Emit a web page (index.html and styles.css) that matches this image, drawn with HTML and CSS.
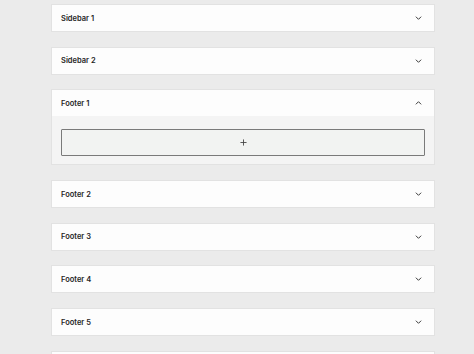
FILE: index.html
```html
<!DOCTYPE html>
<html lang="en">

<head>
    <meta charset="UTF-8">
    <meta name="viewport" content="width=device-width, initial-scale=1.0">
    <title>Widget Areas</title>
    <link rel="stylesheet" href="styles.css">
</head>

<body>
    <main class="areas">
        <!-- Collapsed widget areas -->
        <div class="panel">
            <div class="panel-header">
                <span class="panel-title">Sidebar 1</span>
                <svg class="chevron" viewBox="0 0 8 6"><path d="M1 1.5 L4 4.5 L7 1.5" /></svg>
            </div>
        </div>

        <div class="panel">
            <div class="panel-header">
                <span class="panel-title">Sidebar 2</span>
                <svg class="chevron" viewBox="0 0 8 6"><path d="M1 1.5 L4 4.5 L7 1.5" /></svg>
            </div>
        </div>

        <!-- Open widget area -->
        <div class="panel open">
            <div class="panel-header">
                <span class="panel-title">Footer 1</span>
                <svg class="chevron" viewBox="0 0 8 6"><path d="M1 4.5 L4 1.5 L7 4.5" /></svg>
            </div>
            <div class="panel-body">
                <button class="add-block" aria-label="Add block">
                    <svg viewBox="0 0 8 8"><path d="M4 0.5 V7.5 M0.5 4 H7.5" /></svg>
                </button>
            </div>
        </div>

        <div class="panel">
            <div class="panel-header">
                <span class="panel-title">Footer 2</span>
                <svg class="chevron" viewBox="0 0 8 6"><path d="M1 1.5 L4 4.5 L7 1.5" /></svg>
            </div>
        </div>

        <div class="panel">
            <div class="panel-header">
                <span class="panel-title">Footer 3</span>
                <svg class="chevron" viewBox="0 0 8 6"><path d="M1 1.5 L4 4.5 L7 1.5" /></svg>
            </div>
        </div>

        <div class="panel">
            <div class="panel-header">
                <span class="panel-title">Footer 4</span>
                <svg class="chevron" viewBox="0 0 8 6"><path d="M1 1.5 L4 4.5 L7 1.5" /></svg>
            </div>
        </div>

        <div class="panel">
            <div class="panel-header">
                <span class="panel-title">Footer 5</span>
                <svg class="chevron" viewBox="0 0 8 6"><path d="M1 1.5 L4 4.5 L7 1.5" /></svg>
            </div>
        </div>

        <!-- next area, only its top edge is in view -->
        <div class="panel">
            <div class="panel-header"></div>
        </div>
    </main>
</body>

</html>
```

FILE: styles.css
```css
body {
    margin: 0;
    padding: 0;
    background-color: #ebebeb;
    font-family: Inter, "Noto Sans", sans-serif;
    color: #262626;
    overflow: hidden;
}

.areas {
    width: 382px;
    margin: 0 auto 0 52px;
    padding-top: 5px;
    display: flex;
    flex-direction: column;
    gap: 16.7px;
}

.panel {
    background-color: #fdfdfd;
    box-shadow: 0 0 0 1px #e2e2e2;
    flex-shrink: 0;
}

.panel-header {
    height: 26px;
    display: flex;
    align-items: center;
    justify-content: space-between;
    padding: 0 12px 0 9px;
}

.panel-title {
    font-size: 7.5px;
    font-weight: 600;
}

.chevron {
    width: 7px;
    height: 6px;
    fill: none;
    stroke: #333;
    stroke-width: 1.1;
}

/* Expanded area */
.panel.open .panel-body {
    background-color: #f4f4f4;
    padding: 13px 9px 8px 9px;
}

.add-block {
    display: flex;
    align-items: center;
    justify-content: center;
    width: 100%;
    height: 27px;
    padding: 0;
    background-color: #f2f3f2;
    border: 1.5px solid #7a7a7a;
    border-radius: 1px;
    cursor: pointer;
}

.add-block svg {
    width: 7px;
    height: 7px;
    fill: none;
    stroke: #444;
    stroke-width: 1;
}
```
